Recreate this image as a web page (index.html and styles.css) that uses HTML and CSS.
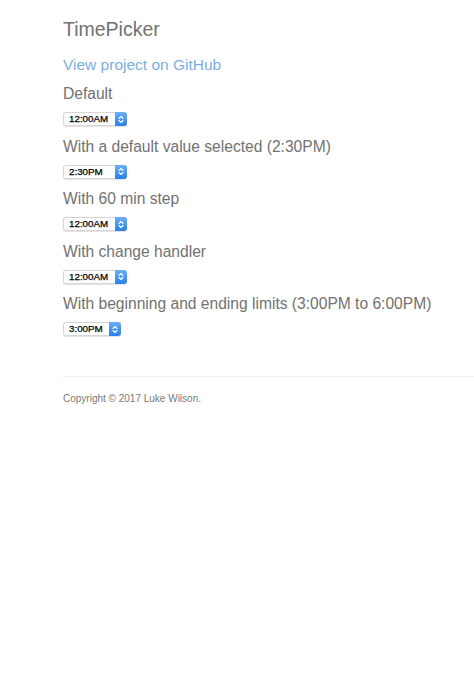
FILE: index.html
```html
<!DOCTYPE html>
<html lang="en">
<head>
<meta charset="utf-8">
<title>TimePicker</title>
<link rel="stylesheet" href="styles.css">
</head>
<body>
<div class="page">
  <h1 class="title">TimePicker</h1>
  <a class="gh-link" href="#">View project on GitHub</a>
  <div class="demos">
    <section class="demo">
      <h2 class="demo-title">Default</h2>
      <div class="picker picker-wide"><span class="picker-value">12:00AM</span><span class="stepper"><svg width="6" height="9" viewBox="0 0 6 9"><path d="M1 3.5 L3 1.5 L5 3.5 M1 5.5 L3 7.5 L5 5.5" fill="none" stroke="#fff" stroke-width="1.1" stroke-linecap="round" stroke-linejoin="round"/></svg></span></div>
    </section>
    <section class="demo">
      <h2 class="demo-title">With a default value selected (2:30PM)</h2>
      <div class="picker picker-wide"><span class="picker-value">2:30PM</span><span class="stepper"><svg width="6" height="9" viewBox="0 0 6 9"><path d="M1 3.5 L3 1.5 L5 3.5 M1 5.5 L3 7.5 L5 5.5" fill="none" stroke="#fff" stroke-width="1.1" stroke-linecap="round" stroke-linejoin="round"/></svg></span></div>
    </section>
    <section class="demo">
      <h2 class="demo-title">With 60 min step</h2>
      <div class="picker picker-wide"><span class="picker-value">12:00AM</span><span class="stepper"><svg width="6" height="9" viewBox="0 0 6 9"><path d="M1 3.5 L3 1.5 L5 3.5 M1 5.5 L3 7.5 L5 5.5" fill="none" stroke="#fff" stroke-width="1.1" stroke-linecap="round" stroke-linejoin="round"/></svg></span></div>
    </section>
    <section class="demo">
      <h2 class="demo-title">With change handler</h2>
      <div class="picker picker-wide"><span class="picker-value">12:00AM</span><span class="stepper"><svg width="6" height="9" viewBox="0 0 6 9"><path d="M1 3.5 L3 1.5 L5 3.5 M1 5.5 L3 7.5 L5 5.5" fill="none" stroke="#fff" stroke-width="1.1" stroke-linecap="round" stroke-linejoin="round"/></svg></span></div>
    </section>
    <section class="demo">
      <h2 class="demo-title">With beginning and ending limits (3:00PM to 6:00PM)</h2>
      <div class="picker picker-narrow"><span class="picker-value">3:00PM</span><span class="stepper"><svg width="6" height="9" viewBox="0 0 6 9"><path d="M1 3.5 L3 1.5 L5 3.5 M1 5.5 L3 7.5 L5 5.5" fill="none" stroke="#fff" stroke-width="1.1" stroke-linecap="round" stroke-linejoin="round"/></svg></span></div>
    </section>
  </div>
  <hr class="rule">
  <p class="copyright">Copyright © 2017 Luke Wilson.</p>
</div>
</body>
</html>
```
FILE: styles.css
```css
html, body {
  margin: 0;
  padding: 0;
  background: #fff;
}

body {
  font-family: "Liberation Sans", Arial, sans-serif;
}

.page {
  padding-left: 63px;
  padding-top: 17px;
}

.title {
  margin: 0;
  font-size: 19.5px;
  line-height: 24px;
  font-weight: normal;
  color: #727272;
}

.gh-link {
  display: block;
  margin-top: 14px;
  font-size: 15.5px;
  line-height: 20px;
  color: #7aafe0;
  text-decoration: none;
}

.demos {
  display: flex;
  flex-direction: column;
  gap: 10.5px;
  margin-top: 9px;
}

.demo {
  display: flex;
  flex-direction: column;
  align-items: flex-start;
  gap: 8px;
}

.demo-title {
  margin: 0;
  font-size: 15.6px;
  line-height: 20px;
  font-weight: normal;
  color: #727272;
}

.picker {
  display: flex;
  align-items: stretch;
  height: 14px;
  box-sizing: border-box;
  border: 1px solid #d6d6d6;
  border-radius: 3px;
  background: #fff;
  box-shadow: 0 0.5px 1px rgba(0, 0, 0, 0.12);
}

.picker-wide {
  width: 64px;
}

.picker-narrow {
  width: 58px;
}

.picker-value {
  flex: 1;
  padding-left: 5px;
  font-size: 9.8px;
  line-height: 12px;
  color: #000;
  -webkit-text-stroke: 0.25px #000;
}

.stepper {
  width: 12px;
  margin: -1px -1px -1px 0;
  display: flex;
  align-items: center;
  justify-content: center;
  border-radius: 0 3px 3px 0;
  background: linear-gradient(#69aff8, #2a7fea);
}

.rule {
  margin: 40px 0 0 0;
  border: 0;
  border-top: 1px solid #eee;
  height: 0;
}

.copyright {
  margin: 15px 0 0 0;
  font-size: 10px;
  line-height: 14px;
  color: #7a7a7a;
}
```
